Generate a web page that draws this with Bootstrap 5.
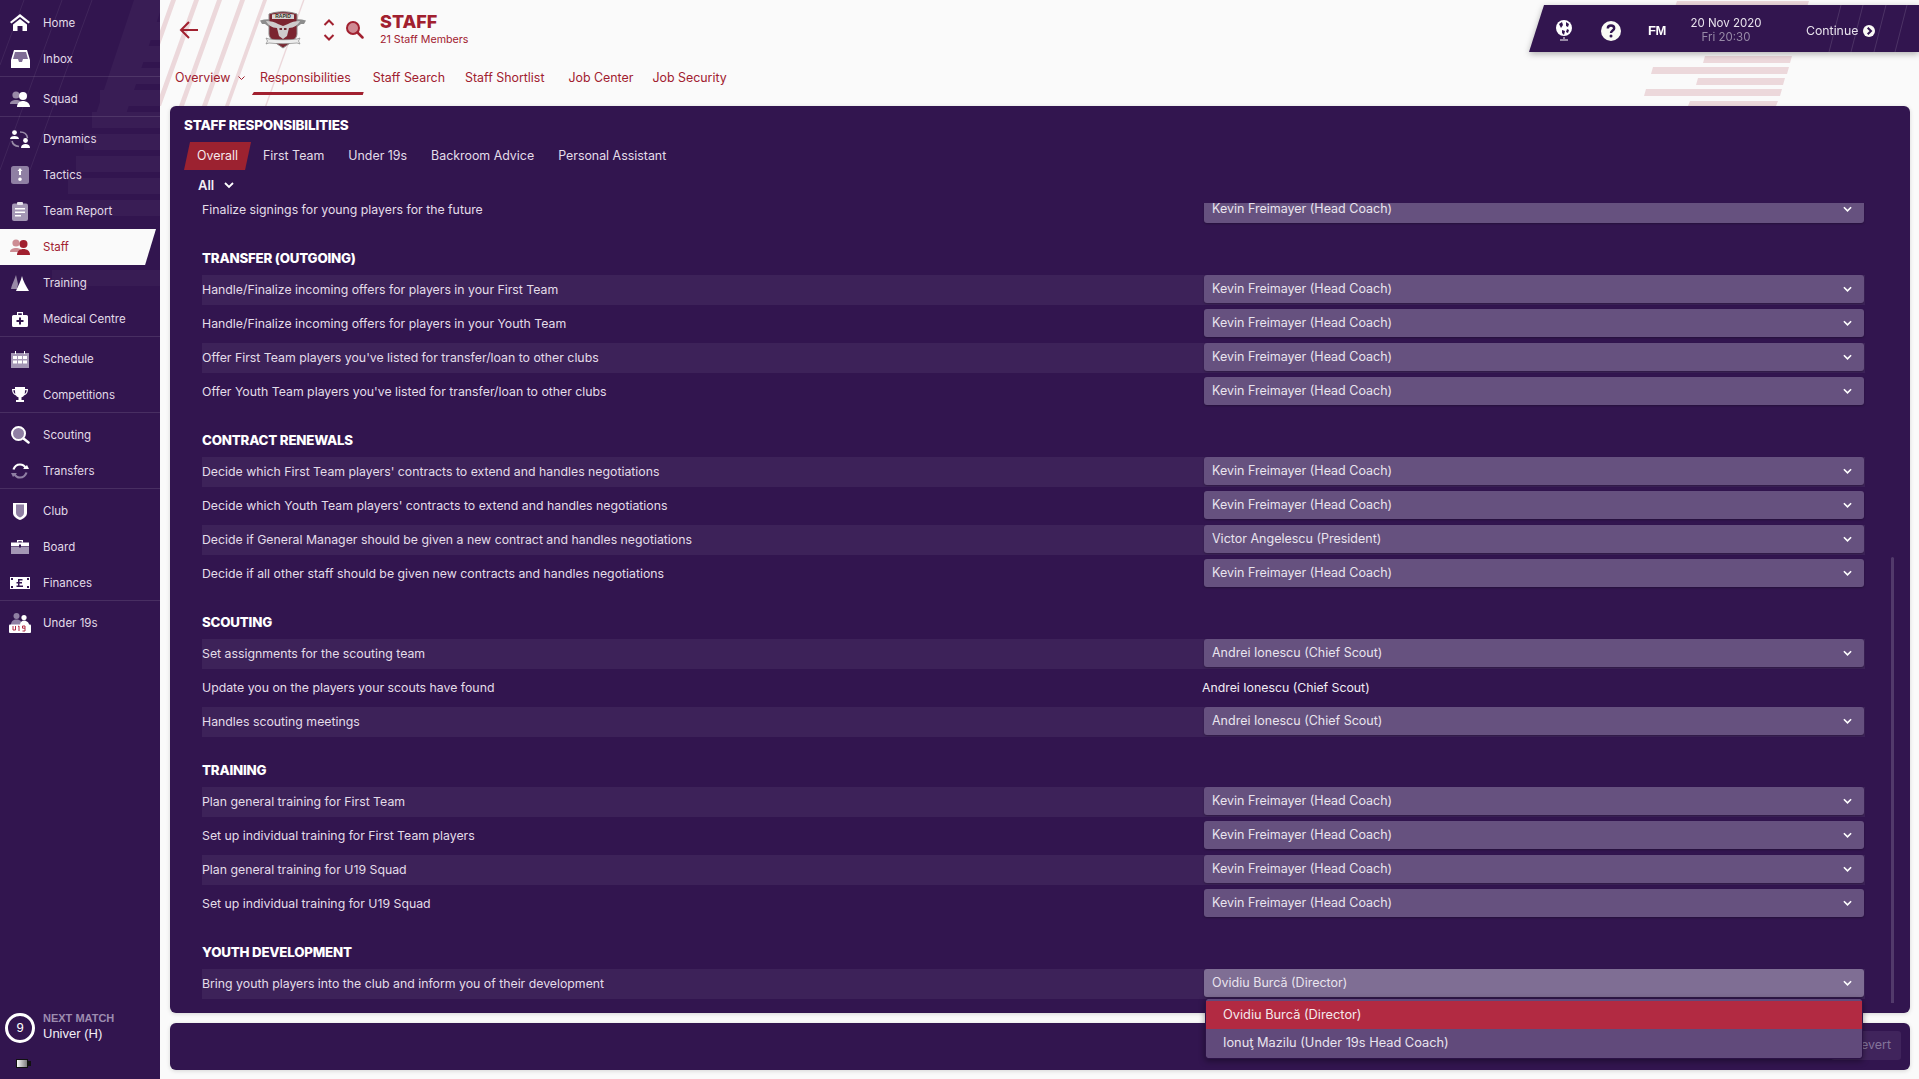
<!DOCTYPE html>
<html lang="en">
<head>
  <meta charset="UTF-8">
  <title>Staff Responsibilities</title>
  <link href="https://cdn.jsdelivr.net/npm/bootstrap@5.3.0/dist/css/bootstrap.min.css" rel="stylesheet">
  <style>
    html, body { height: 100%; }
    body {
      font-family: Inter, "Noto Sans", sans-serif;
      font-size: 12.3px;
      background-color: #fafafa;
      color: #e4dde9;
      overflow: hidden;
    }
    .side-bar {
      width: 160px;
      flex: 0 0 160px;
      height: 1079px;
      background-color: #32154f;
      padding-top: 5px;
      position: relative;
    }
    .side-art { position: absolute; left: 0; top: 0; }
    .side-group {
      margin-bottom: 4px;
      box-shadow: inset 0 -1px 0 rgba(255,255,255,.11);
      position: relative;
    }
    .side-item {
      display: flex;
      align-items: center;
      height: 36px;
      padding-top: 2px;
      color: #e2dbe8;
      text-decoration: none;
      font-size: 11.5px;
    }
    .side-icon { width: 43px; flex: 0 0 43px; display: flex; justify-content: center; padding-right: 3px; margin-top: -2px; color: #fff; }
    .side-item.is-active {
      width: 156px;
      background-color: #fafafa;
      color: #a1202f;
      clip-path: polygon(0 0, 100% 0, 93% 100%, 0 100%);
    }
    .side-item.is-active .side-icon { color: #a1202f; }
    .next-match { position: absolute; left: 5px; top: 1011px; }
    .next-ring {
      width: 30px; height: 30px; border: 3px solid #fff; border-radius: 50%; margin-top: 2px;
      font-family: "Liberation Sans", sans-serif; font-size: 13px; color: #fff;
    }
    .next-label { font-family: "Liberation Sans", sans-serif; font-weight: 700; font-size: 11px; color: #9d8caf; line-height: 13px; }
    .next-club { font-family: "Liberation Sans", sans-serif; font-size: 13px; color: #f2eef5; line-height: 17px; }
    .battery-ico { position: absolute; left: 16px; top: 1059px; }

    .main-col { position: relative; height: 1079px; min-width: 0; }
    .page-art { position: absolute; left: 0; top: 0; }
    .head-row { height: 60px; position: relative; }
    .back-arrow { margin-left: 19px; margin-right: 62px; color: #a1202f; }
    .club-crest { margin-right: 17px; }
    .title-big { font-size: 18px; font-weight: 800; color: #a1202f; line-height: 20px; margin-top: 2px; }
    .title-sub { font-size: 10.7px; color: #a1202f; line-height: 14px; margin-top: 1px; }
    .util-bar {
      position: absolute; right: 0; top: 5px; width: 390px; height: 47px;
    }
    .util-shape {
      height: 47px;
      background-color: #32154f;
      clip-path: polygon(15px 0, 100% 0, 100% 100%, 0 100%);
      position: relative;
    }
    .util-shadow { filter: drop-shadow(0 2px 3px rgba(0,0,0,.3)); }
    .util-date { font-size: 11.5px; color: #e8e3ed; line-height: 14px; text-align: center; }
    .util-time { color: #978aa7; }
    .fm-mark { font-family: "Liberation Sans", sans-serif; font-weight: 700; font-size: 13px; color: #fff; letter-spacing: -.5px; }
    .top-tabs { height: 35px; position: relative; padding-left: 15px; }
    .top-tabs .nav-link {
      color: #a1202f; padding: 0; font-size: 12.4px; height: 35px; line-height: 36px; position: relative;
    }
    .top-tabs .nav-link.is-on::after {
      content: ""; position: absolute; left: -8px; right: -13px; bottom: 0; height: 3px;
      background-color: #a1202f; clip-path: polygon(2px 0, 100% 0, calc(100% - 1px) 100%, 0 100%);
    }
    .main-panel {
      margin: 11px 9px 0 10px;
      height: 907px;
      background-color: #32154f;
      border-radius: 6px;
      position: relative;
      display: flex;
      flex-direction: column;
      box-shadow: 0 1px 4px rgba(0,0,0,.15);
    }
    .panel-title { font-weight: 800; font-size: 13.5px; color: #fff; padding: 11px 0 0 14px; line-height: 16px; letter-spacing: -.2px; }
    .sub-tabs { margin: 9px 0 0 14px; height: 28px; }
    .sub-tabs .nav-link { color: #e4dde9; padding: 0 12px; line-height: 28px; font-size: 12.4px; }
    .sub-tabs .nav-link.is-on {
      background-color: #9c2230; color: #f5e9ec; padding: 0 13px;
      clip-path: polygon(6px 0, 100% 0, calc(100% - 6px) 100%, 0 100%);
    }
    .all-filter { font-weight: 600; font-size: 13px; color: #f2eef5; margin: 6px 0 9px 28px; height: 18px; line-height: 18px; }
    .resp-scroll { flex: 1 1 auto; overflow: hidden; margin: 0 0 10px 17px; position: relative; }
    .resp-inner { margin: -8px 0 0 15px; width: 1663px; }
    .resp-scrollbar { position: absolute; left: 1704px; top: 354px; width: 3px; height: 449px; background-color: rgba(255,255,255,.16); border-radius: 2px; }
    .resp-head { font-weight: 800; font-size: 13.3px; color: #fff; height: 20px; line-height: 20px; margin: 23px 0 7px; letter-spacing: -.2px; }
    .resp-row { height: 30px; margin-bottom: 4px; line-height: 29px; }
    .resp-row.is-lit { background-color: #3d2259; }
    .resp-label { width: 1000px; flex: 0 0 1000px; }
    .resp-plain { color: #f2eef5; }
    .resp-select {
      width: 660px; height: 28px; padding: 1px 28px 0 8px; margin-left: 2px;
      font-size: 12.5px; color: #e9e4ee; background-color: #66517f; border: 0; border-radius: 3px;
      box-shadow: 0 1px 2px rgba(0,0,0,.25);
      background-image: url("data:image/svg+xml,%3csvg xmlns='http://www.w3.org/2000/svg' viewBox='0 0 10 7'%3e%3cpath fill='none' stroke='%23fff' stroke-width='1.8' d='M1 1l4 4 4-4'/%3e%3c/svg%3e");
      background-size: 9px 7px; background-position: right 12px center;
    }
    .resp-select.is-open { background-color: #7f6e94; }
    .foot-bar {
      margin: 10px 9px 0 10px; height: 47px; background-color: #32154f; border-radius: 6px; padding: 8px 9px 8px 0;
      box-shadow: 0 1px 4px rgba(0,0,0,.15);
    }
    .revert-btn { background-color: #40245c; color: #83749a; border: 0; border-radius: 3px; height: 29px; width: 70px; font-size: 12.5px; padding: 0 10px 0 0; text-align: right; }
    .person-menu {
      position: absolute; left: 1045px; top: 998px; width: 658px; padding: 2px 0 0; margin: 0;
      background-color: #614a7b; border: 1px solid #2c1246; border-radius: 3px;
      box-shadow: 0 2px 6px rgba(0,0,0,.4); font-size: 12.8px; display: block;
    }
    .person-menu .dropdown-item { color: #e9e4ee; height: 29px; line-height: 27px; padding: 0 17px; }
    .person-menu .dropdown-item.active { background-color: #b22a42; color: #f5e9ec; height: 28px; }
  </style>
</head>
<body class="d-flex">

  <aside class="side-bar">
    <svg class="side-art" width="160" height="330" viewBox="0 0 160 330">
      <g fill="#fff" opacity=".03">
        <rect x="130" y="22" width="30" height="18"/><rect x="122" y="46" width="38" height="16"/>
        <rect x="112" y="68" width="48" height="16"/><rect x="100" y="90" width="60" height="16"/>
        <rect x="92" y="112" width="68" height="16"/><rect x="84" y="134" width="76" height="16"/>
        <rect x="76" y="156" width="84" height="16"/><rect x="68" y="178" width="92" height="16"/>
        <rect x="60" y="200" width="100" height="16"/><rect x="52" y="270" width="108" height="16"/>
        <path d="M134 0h30l-40 120h-30z"/>
      </g>
      <g stroke="#fff" opacity=".07" fill="none"><path d="M62 0L0 170M24 0L0 65M92 0L30 170"/></g>
    </svg>

    <div class="side-group">
      <a class="side-item" href="#"><span class="side-icon">
        <svg width="20" height="18" viewBox="0 0 20 18" fill="currentColor"><path d="M10 0l10 8-1.400 1.600L10 3 1.400 9.600 0 8z"/><path d="M3 10.500l7-5.500 7 5.500V17h-4.500v-5h-5v5H3z"/></svg>
      </span>Home</a>
      <a class="side-item" href="#"><span class="side-icon">
        <svg width="19" height="18" viewBox="0 0 19 18" fill="currentColor"><path d="M3 0h13l3 10v8H0v-8z"/><path fill="#7f6c95" d="M4 2h11l2 7h-5l-1 3H8L7 9H2z"/></svg>
      </span>Inbox</a>
    </div>

    <div class="side-group">
      <a class="side-item" href="#"><span class="side-icon">
        <svg width="20" height="16" viewBox="0 0 20 16" fill="currentColor"><g opacity=".5"><circle cx="6" cy="4" r="3.600"/><path d="M0 13c0-3 3-4 6-4s6 1 6 4z"/></g><circle cx="13" cy="5" r="4"/><path d="M7 16c0-4 3-6 6-6s7 2 7 6z"/></svg>
      </span>Squad</a>
    </div>

    <div class="side-group">
      <a class="side-item" href="#"><span class="side-icon">
        <svg width="20" height="18" viewBox="0 0 20 18" fill="currentColor"><circle cx="4.500" cy="2.600" r="2.400"/><path d="M0 9c0-2 2-3 4.500-3S9 7 9 9z"/><circle cx="15.500" cy="10.500" r="2.400"/><path d="M11 18c0-3 2-4 4.500-4s4.500 1 4.500 4z"/><path fill="none" stroke="currentColor" stroke-width="1.600" opacity=".5" d="M10 2c4 0 7 2 7.500 6M2 11c.5 3 3 5 7 5.500"/></svg>
      </span>Dynamics</a>
      <a class="side-item" href="#"><span class="side-icon">
        <svg width="18" height="18" viewBox="0 0 18 18"><rect width="18" height="18" rx="2.500" fill="#8f7fa3"/><path fill="#fff" d="M9 2l2.500 3H10v4H8V5H6.500zM9 11.500a1.800 1.800 0 110 3.600 1.800 1.800 0 010-3.600z"/></svg>
      </span>Tactics</a>
      <a class="side-item" href="#"><span class="side-icon">
        <svg width="16" height="19" viewBox="0 0 16 19"><rect y="1.500" width="16" height="17.500" rx="2" fill="#a497b5"/><rect x="5" width="6" height="3" rx="1" fill="#e8e3ed"/><path fill="#fff" d="M3 6h10v1.500H3zM3 9.500h10V11H3zM3 13h6v1.500H3z"/></svg>
      </span>Team Report</a>
      <a class="side-item is-active" href="#"><span class="side-icon">
        <svg width="20" height="16" viewBox="0 0 20 16" fill="currentColor"><g opacity=".5"><circle cx="6" cy="4" r="3.600"/><path d="M0 13c0-3 3-4 6-4s6 1 6 4z"/></g><circle cx="13.500" cy="5" r="4"/><path d="M7 16c0-4 3-6 6.500-6s6.500 2 6.500 6z"/></svg>
      </span>Staff</a>
      <a class="side-item" href="#"><span class="side-icon">
        <svg width="18" height="17" viewBox="0 0 18 17" fill="currentColor"><path opacity=".5" d="M5 0l2 9-1 5H0c1-5 3-8 5-14z"/><path d="M11 1c1 5 4 10 7 15H5c2-5 5-10 6-15z"/></svg>
      </span>Training</a>
      <a class="side-item" href="#"><span class="side-icon">
        <svg width="16" height="15" viewBox="0 0 16 15"><path fill="#fff" d="M5 0h6v3h3.500A1.500 1.500 0 0116 4.500v9a1.500 1.500 0 01-1.500 1.500h-13A1.500 1.500 0 010 13.500v-9A1.500 1.500 0 011.500 3H5zm1.200 1.300V3h3.600V1.300z"/><path fill="#32154f" d="M7 5.500h2V8h2.500v2H9v2.500H7V10H4.500V8H7z"/></svg>
      </span>Medical Centre</a>
    </div>

    <div class="side-group">
      <a class="side-item" href="#"><span class="side-icon">
        <svg width="18" height="17" viewBox="0 0 18 17"><rect y="2" width="18" height="15" fill="#a497b5"/><path fill="#fff" d="M4 0h1v3H4zM13 0h1v3h-1zM2 5h4v3H2zM7 5h4v3H7zM12 5h4v3h-4zM2 9.500h4v3H2zM7 9.500h4v3H7zM12 9.500h4v3h-4z"/></svg>
      </span>Schedule</a>
      <a class="side-item" href="#"><span class="side-icon">
        <svg width="16" height="17" viewBox="0 0 16 17" fill="currentColor"><path d="M3 0h10v2h3c0 3-1 5.500-4 6.500-.7 1-1.500 1.500-2.500 1.800V13H12v2H4v-2h2.500v-2.700C5.500 10 4.700 9.500 4 8.500 1 7.500 0 5 0 2h3zM1.300 3.200c.1 1.500.7 3 2 3.800-.2-1.200-.3-2.500-.3-3.800zm13.400 0H13c0 1.300-.1 2.600-.3 3.800 1.300-.8 1.900-2.300 2-3.800z"/></svg>
      </span>Competitions</a>
    </div>

    <div class="side-group">
      <a class="side-item" href="#"><span class="side-icon">
        <svg width="19" height="18" viewBox="0 0 19 18"><circle cx="7.500" cy="7.500" r="6.500" fill="#8f7fa3" stroke="#fff" stroke-width="2"/><path stroke="#fff" stroke-width="2.500" stroke-linecap="round" d="M12.500 12.500L17.500 16.500"/></svg>
      </span>Scouting</a>
      <a class="side-item" href="#"><span class="side-icon">
        <svg width="18" height="16" viewBox="0 0 18 16" fill="none" stroke-width="2.200"><path stroke="#fff" d="M2.500 6.500C3.500 3.500 6 1.500 9 1.500c2.500 0 4.500 1.200 5.500 3.500"/><path fill="#fff" d="M12 6h6l-2-4z"/><path stroke="#8f7fa3" d="M15.500 9.500c-1 3-3.500 5-6.500 5-2.500 0-4.500-1.200-5.500-3.500"/><path fill="#8f7fa3" d="M6 10H0l2 4z"/></svg>
      </span>Transfers</a>
    </div>

    <div class="side-group">
      <a class="side-item" href="#"><span class="side-icon">
        <svg width="14" height="17" viewBox="0 0 14 17"><path fill="#fff" d="M0 0h14v10c0 3-3 5.500-7 7-4-1.500-7-4-7-7z"/><path fill="#8f7fa3" d="M3 1.500h8V10c0 2-2 3.500-4 4.500C5 13.500 3 12 3 10z"/></svg>
      </span>Club</a>
      <a class="side-item" href="#"><span class="side-icon">
        <svg width="18" height="14" viewBox="0 0 18 14"><path fill="#fff" d="M6 0h6v2.500h-1.300V1.200H7.300v1.300H6z"/><path fill="#fff" d="M0 2.500h18V6H0z"/><path fill="#a497b5" d="M0 6.500h18V14H0z"/><rect x="8" y="4.500" width="2" height="3" fill="#32154f"/></svg>
      </span>Board</a>
      <a class="side-item" href="#"><span class="side-icon">
        <svg width="20" height="12" viewBox="0 0 20 12"><rect width="20" height="12" fill="#fff"/><path fill="#32154f" d="M1 1h2v2H1zM17 1h2v2h-2zM1 9h2v2H1zM17 9h2v2h-2zM8 2h4.500v1.500H9.500V5H12v1.500H9.500V8.500H13V10H6.500V8.500H8V6.500H6.500V5H8z"/></svg>
      </span>Finances</a>
    </div>

    <div class="side-group" style="box-shadow:none">
      <a class="side-item" href="#"><span class="side-icon">
        <svg width="22" height="20" viewBox="0 0 22 20"><circle cx="7.500" cy="3" r="3" fill="#8f7fa3"/><path fill="#8f7fa3" d="M2 12c0-4 2.500-5.500 5.500-5.500S13 8 13 12z"/><circle cx="15" cy="4.500" r="2.600" fill="#fff"/><path fill="#fff" d="M11 12c0-3 2-4.500 4-4.500s5 1.500 5 4.500z"/><rect y="11.500" width="22" height="8.500" rx="1" fill="#fff"/><path fill="none" stroke="#b22a42" d="M4 13v4h2.500v-4M9 13.500l1-.5v5M13.500 13v2.200h2.500M16 13v5M13.500 13H16M13.500 18H16"/></svg>
      </span>Under 19s</a>
    </div>

    <div class="next-match d-flex align-items-center gap-2">
      <div class="next-ring d-flex align-items-center justify-content-center">9</div>
      <div>
        <div class="next-label">NEXT MATCH</div>
        <div class="next-club">Univer (H)</div>
      </div>
    </div>
    <svg class="battery-ico" width="15" height="9" viewBox="0 0 15 9"><defs><linearGradient id="batt"><stop offset="0" stop-color="#fff"/><stop offset="1" stop-color="#777"/></linearGradient></defs><rect x=".5" y=".5" width="11" height="8" fill="url(#batt)" stroke="#111"/><rect x="12" y="2" width="3" height="5" fill="#111"/></svg>
  </aside>

  <main class="main-col flex-grow-1">
    <svg class="page-art" width="1759" height="106" viewBox="0 0 1759 106">
      <g fill="#ecd8db">
        <path d="M11 0h5L-22 106h-5zM34 0h5L1 106h-5zM57 0h5L24 106h-5zM80 0h5L47 106h-5zM103 0h4L69 106h-4z"/>
        <path d="M143 0h1.500l-38 106H105z"/>
        <path d="M1517 1h132l-2 6h-132zM1545 56h87l-2 7h-87zM1493 67h136l-2 7h-136zM1538 78h87l-2 7h-87zM1486 89h136l-2 7h-136zM1530 101h88l-2 5h-88z"/>
      </g>
    </svg>

    <div class="head-row d-flex align-items-center">
      <svg class="back-arrow" width="19" height="18" viewBox="0 0 19 18" fill="none" stroke="currentColor" stroke-width="2"><path d="M19 9H2M10 1L2 9l8 8"/></svg>
      <svg class="club-crest" width="46" height="38" viewBox="0 0 46 38">
        <path fill="#8d8d8d" d="M0 9.500C5 8 10 8 15 9v8l-6-1-4-3-3 0zM46 9.500C41 8 36 8 31 9v8l6-1 4-3 3 0z"/>
        <path fill="#7b2530" stroke="#8f8a8a" d="M9 3C18 0 28 0 37 3v20c0 5-7 9-14 14C16 32 9 28 9 23z"/>
        <path fill="#d8d5d5" d="M12 3.500C19 2 27 2 34 3.500V8H12z"/>
        <text x="23" y="7.300" text-anchor="middle" font-family="Liberation Sans, sans-serif" font-size="5" font-weight="700" fill="#332">RAPID</text>
        <path fill="#cfcccc" d="M6 10c5 0 9 1 12 3l5 2 5-2c3-2 7-3 12-3-2 4-6 7-11 7l-2 8-4 3-4-3-2-8c-5 0-9-3-11-7z"/>
        <path fill="#6e2a32" d="M19.500 17h2.500v2h-2.500zM24 17h2.500v2H24z"/>
        <path fill="#ececec" stroke="#777" stroke-width=".6" d="M6 27l3 1c9 1 19 1 28 0l3-1-1.500 3 1.500 3-3-1c-9 1-19 1-28 0l-3 1 1.500-3z"/>
      </svg>
      <svg width="12" height="24" viewBox="0 0 12 24" fill="none" stroke="#a1202f" stroke-width="2" style="margin-right:11px"><path d="M1.500 7L6 2.500 10.500 7M1.500 17L6 21.500 10.500 17"/></svg>
      <svg width="18" height="19" viewBox="0 0 18 19"><circle cx="7" cy="7" r="6" fill="#cf8a93" stroke="#a1202f" stroke-width="2"/><path stroke="#a1202f" stroke-width="2.500" stroke-linecap="round" d="M11.500 11.500L16.500 16.500"/></svg>
      <div class="align-self-start" style="padding-top:10px;margin-left:16px">
        <div class="title-big">STAFF</div>
        <div class="title-sub">21 Staff Members</div>
      </div>
      <div class="util-bar util-shadow">
        <div class="util-shape d-flex align-items-center">
          <svg class="position-absolute top-0 start-0" width="390" height="47" viewBox="0 0 390 47"><path stroke="#fff" opacity=".13" fill="none" d="M300 47L312 0M322 47L334 0M345 47L357 0M366 47L378 0"/></svg>
          <svg class="position-absolute" style="left:26px;top:14px" width="18" height="22" viewBox="0 0 18 22"><circle cx="9" cy="9" r="8" fill="#fff"/><path fill="#32154f" d="M4 5l3-2 1 3-2 3zM11 3l3 2-1 3-2-1zM7 11l3 1-1 4-2-2zM12 10l2 1-1 3-2-1z"/><path stroke="#fff" fill="none" d="M9 18v2M5 21h8"/></svg>
          <svg class="position-absolute" style="left:72px;top:16px" width="20" height="20" viewBox="0 0 20 20"><circle cx="10" cy="10" r="10" fill="#fafaf5"/><path fill="none" stroke="#32154f" stroke-width="2.400" d="M6.800 7.500c0-2 1.500-3 3.200-3s3.200 1 3.200 2.800c0 2.200-3.200 2.200-3.200 4.700"/><circle cx="10" cy="15" r="1.500" fill="#32154f"/></svg>
          <span class="fm-mark position-absolute" style="left:119px;top:16px">FM</span>
          <div class="util-date position-absolute" style="left:147px;width:100px;top:11px"><div>20 Nov 2020</div><div class="util-time">Fri 20:30</div></div>
          <span class="position-absolute" style="left:277px;top:18px;font-size:12.3px;line-height:16px;color:#e8e3ed">Continue</span>
          <svg class="position-absolute" style="left:334px;top:20px" width="12" height="12" viewBox="0 0 12 12"><circle cx="6" cy="6" r="6" fill="#fafaf5"/><path fill="none" stroke="#32154f" stroke-width="2" d="M4.700 2.800L8 6 4.700 9.200"/></svg>
        </div>
      </div>
    </div>

    <nav class="nav top-tabs gap-0">
      <a class="nav-link" href="#" style="margin-right:15px">Overview <svg class="ms-1" width="7" height="5" viewBox="0 0 7 5" fill="none" stroke="#a1202f"><path d="M.5.5l3 3 3-3"/></svg></a>
      <a class="nav-link is-on" href="#" style="margin-right:22px">Responsibilities</a>
      <a class="nav-link" href="#" style="margin-right:20px">Staff Search</a>
      <a class="nav-link" href="#" style="margin-right:24px">Staff Shortlist</a>
      <a class="nav-link" href="#" style="margin-right:19px">Job Center</a>
      <a class="nav-link" href="#">Job Security</a>
    </nav>

    <section class="main-panel">
      <div class="panel-title">STAFF RESPONSIBILITIES</div>
      <nav class="nav sub-tabs">
        <a class="nav-link is-on" href="#">Overall</a>
        <a class="nav-link" href="#">First Team</a>
        <a class="nav-link" href="#">Under 19s</a>
        <a class="nav-link" href="#">Backroom Advice</a>
        <a class="nav-link" href="#">Personal Assistant</a>
      </nav>
      <div class="all-filter d-flex align-items-center" style="gap:10px">All <svg width="10" height="7" viewBox="0 0 10 7" fill="none" stroke="#fff" stroke-width="1.800"><path d="M1 1l4 4 4-4"/></svg></div>

      <div class="resp-scroll">
        <div class="resp-inner">
          <div class="resp-row d-flex align-items-start"><div class="resp-label">Finalize signings for young players for the future</div><select class="form-select resp-select"><option>Kevin Freimayer (Head Coach)</option></select></div>

          <div class="resp-head">TRANSFER (OUTGOING)</div>
          <div class="resp-row is-lit d-flex align-items-start"><div class="resp-label">Handle/Finalize incoming offers for players in your First Team</div><select class="form-select resp-select"><option>Kevin Freimayer (Head Coach)</option></select></div>
          <div class="resp-row d-flex align-items-start"><div class="resp-label">Handle/Finalize incoming offers for players in your Youth Team</div><select class="form-select resp-select"><option>Kevin Freimayer (Head Coach)</option></select></div>
          <div class="resp-row is-lit d-flex align-items-start"><div class="resp-label">Offer First Team players you've listed for transfer/loan to other clubs</div><select class="form-select resp-select"><option>Kevin Freimayer (Head Coach)</option></select></div>
          <div class="resp-row d-flex align-items-start"><div class="resp-label">Offer Youth Team players you've listed for transfer/loan to other clubs</div><select class="form-select resp-select"><option>Kevin Freimayer (Head Coach)</option></select></div>

          <div class="resp-head">CONTRACT RENEWALS</div>
          <div class="resp-row is-lit d-flex align-items-start"><div class="resp-label">Decide which First Team players' contracts to extend and handles negotiations</div><select class="form-select resp-select"><option>Kevin Freimayer (Head Coach)</option></select></div>
          <div class="resp-row d-flex align-items-start"><div class="resp-label">Decide which Youth Team players' contracts to extend and handles negotiations</div><select class="form-select resp-select"><option>Kevin Freimayer (Head Coach)</option></select></div>
          <div class="resp-row is-lit d-flex align-items-start"><div class="resp-label">Decide if General Manager should be given a new contract and handles negotiations</div><select class="form-select resp-select"><option>Victor Angelescu (President)</option></select></div>
          <div class="resp-row d-flex align-items-start"><div class="resp-label">Decide if all other staff should be given new contracts and handles negotiations</div><select class="form-select resp-select"><option>Kevin Freimayer (Head Coach)</option></select></div>

          <div class="resp-head">SCOUTING</div>
          <div class="resp-row is-lit d-flex align-items-start"><div class="resp-label">Set assignments for the scouting team</div><select class="form-select resp-select"><option>Andrei Ionescu (Chief Scout)</option></select></div>
          <div class="resp-row d-flex align-items-start"><div class="resp-label">Update you on the players your scouts have found</div><div class="resp-plain">Andrei Ionescu (Chief Scout)</div></div>
          <div class="resp-row is-lit d-flex align-items-start"><div class="resp-label">Handles scouting meetings</div><select class="form-select resp-select"><option>Andrei Ionescu (Chief Scout)</option></select></div>

          <div class="resp-head">TRAINING</div>
          <div class="resp-row is-lit d-flex align-items-start"><div class="resp-label">Plan general training for First Team</div><select class="form-select resp-select"><option>Kevin Freimayer (Head Coach)</option></select></div>
          <div class="resp-row d-flex align-items-start"><div class="resp-label">Set up individual training for First Team players</div><select class="form-select resp-select"><option>Kevin Freimayer (Head Coach)</option></select></div>
          <div class="resp-row is-lit d-flex align-items-start"><div class="resp-label">Plan general training for U19 Squad</div><select class="form-select resp-select"><option>Kevin Freimayer (Head Coach)</option></select></div>
          <div class="resp-row d-flex align-items-start"><div class="resp-label">Set up individual training for U19 Squad</div><select class="form-select resp-select"><option>Kevin Freimayer (Head Coach)</option></select></div>

          <div class="resp-head">YOUTH DEVELOPMENT</div>
          <div class="resp-row is-lit d-flex align-items-start"><div class="resp-label">Bring youth players into the club and inform you of their development</div><select class="form-select resp-select is-open"><option>Ovidiu Burcă (Director)</option></select></div>
        </div>
        <div class="resp-scrollbar"></div>
      </div>
    </section>

    <div class="foot-bar d-flex justify-content-end">
      <button class="btn revert-btn" type="button">Revert</button>
    </div>

    <ul class="dropdown-menu person-menu show">
      <li><a class="dropdown-item active" href="#">Ovidiu Burcă (Director)</a></li>
      <li><a class="dropdown-item" href="#">Ionuţ Mazilu (Under 19s Head Coach)</a></li>
    </ul>
  </main>

  <script src="https://cdn.jsdelivr.net/npm/bootstrap@5.3.0/dist/js/bootstrap.bundle.min.js"></script>
</body>
</html>
